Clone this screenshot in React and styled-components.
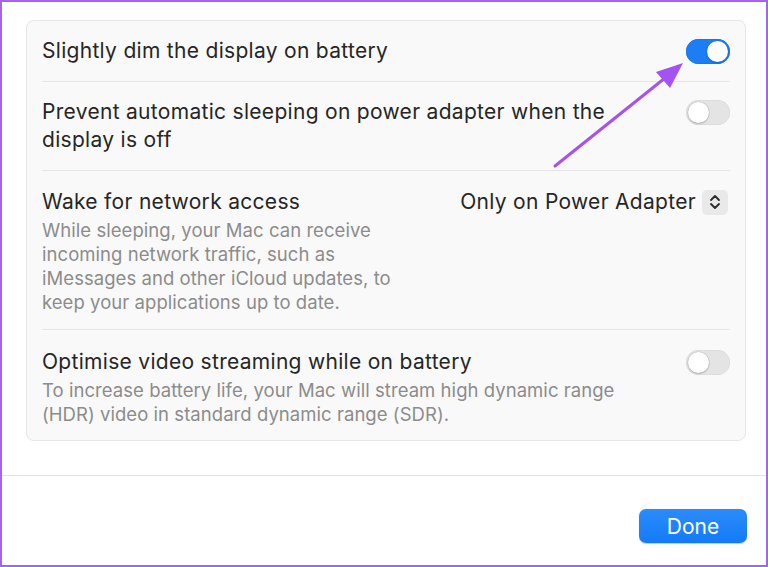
import React from 'react';
import styled, { createGlobalStyle } from 'styled-components';

const GlobalStyle = createGlobalStyle`
  html, body {
    margin: 0;
    padding: 0;
    background: #ffffff;
  }
  body {
    font-family: Inter, "Noto Sans", "Liberation Sans", sans-serif;
    -webkit-font-smoothing: antialiased;
  }
`;

const Window = styled.div`
  position: relative;
  box-sizing: border-box;
  width: 768px;
  height: 567px;
  border: 2px solid #a663ef;
  background: #ffffff;
  display: flex;
  flex-direction: column;
`;

const Content = styled.div`
  padding: 18px 20px 0 24px;
`;

const Card = styled.div`
  background: #f9f9f9;
  border: 1px solid #e6e6e6;
  border-radius: 8px;
  padding: 0 15px;
`;

const Row = styled.div`
  display: flex;
  align-items: flex-start;
  justify-content: space-between;
  gap: 16px;
  padding: ${(p) => p.$pad || '16px 0 16px'};
  border-bottom: ${(p) => (p.$last ? 'none' : '1px solid #e5e5e5')};
`;

const TextBlock = styled.div`
  display: flex;
  flex-direction: column;
`;

const Title = styled.div`
  font-size: 21px;
  line-height: 28px;
  color: #262626;
  letter-spacing: 0.3px;
`;

const Description = styled.div`
  margin-top: 2px;
  font-size: 18.5px;
  line-height: 24px;
  color: #8c8c8c;
  letter-spacing: 0.05px;
`;

const Track = styled.div`
  flex: none;
  box-sizing: border-box;
  width: 44px;
  height: 25px;
  margin-top: 2px;
  border-radius: 13px;
  padding: 2px;
  display: flex;
  justify-content: ${(p) => (p.$on ? 'flex-end' : 'flex-start')};
  background: ${(p) => (p.$on ? '#1b7ef7' : '#e4e4e4')};
  box-shadow: inset 0 0 0 0.5px ${(p) => (p.$on ? '#1670e0' : '#d6d6d6')};
`;

const Knob = styled.div`
  width: 21px;
  height: 21px;
  border-radius: 50%;
  background: #ffffff;
  box-shadow: 0 0 0 0.5px rgba(0, 0, 0, 0.12), 0 1px 2px rgba(0, 0, 0, 0.18);
`;

const Popup = styled.div`
  flex: none;
  display: flex;
  align-items: center;
  gap: 6px;
  margin-right: 2px;
  font-size: 21px;
  line-height: 28px;
  color: #262626;
  letter-spacing: 0.3px;
`;

const Stepper = styled.div`
  width: 26px;
  height: 25px;
  border-radius: 5px;
  background: #e9e9e9;
  display: flex;
  align-items: center;
  justify-content: center;
`;

const Footer = styled.div`
  margin-top: 34px;
  border-top: 1px solid #e2e2e2;
  flex: 1;
  display: flex;
  justify-content: flex-end;
  align-items: flex-start;
  padding: 33px 19px 0 0;
`;

const DoneButton = styled.button`
  width: 108px;
  height: 34px;
  border: none;
  border-radius: 7px;
  background: linear-gradient(#2b8bfb, #137bf8);
  color: #ffffff;
  font-family: Inter, "Noto Sans", "Liberation Sans", sans-serif;
  font-size: 21px;
  padding: 0;
  box-shadow: 0 0.5px 1px rgba(0, 0, 0, 0.2);
`;

const ArrowLayer = styled.svg`
  position: absolute;
  left: 0;
  top: 0;
  pointer-events: none;
`;

const Toggle = ({ on }) => (
  <Track $on={on}>
    <Knob />
  </Track>
);

const Chevrons = () => (
  <svg width="14" height="18" viewBox="0 0 14 18">
    <path d="M3 7 L7 3 L11 7" fill="none" stroke="#2a2a2a" strokeWidth="1.8" strokeLinecap="round" strokeLinejoin="round" />
    <path d="M3 11 L7 15 L11 11" fill="none" stroke="#2a2a2a" strokeWidth="1.8" strokeLinecap="round" strokeLinejoin="round" />
  </svg>
);

const App = () => (
  <>
    <GlobalStyle />
    <Window>
      <Content>
        <Card>
          <Row>
            <Title>Slightly dim the display on battery</Title>
            <Toggle on />
          </Row>
          <Row>
            <Title>
              Prevent automatic sleeping on power adapter when the
              <br />
              display is off
            </Title>
            <Toggle />
          </Row>
          <Row $pad="17px 0 15px">
            <TextBlock>
              <Title>Wake for network access</Title>
              <Description>
                While sleeping, your Mac can receive
                <br />
                incoming network traffic, such as
                <br />
                iMessages and other iCloud updates, to
                <br />
                keep your applications up to date.
              </Description>
            </TextBlock>
            <Popup>
              Only on Power Adapter
              <Stepper>
                <Chevrons />
              </Stepper>
            </Popup>
          </Row>
          <Row $last $pad="18px 0 14px">
            <TextBlock>
              <Title>Optimise video streaming while on battery</Title>
              <Description>
                To increase battery life, your Mac will stream high dynamic range
                <br />
                (HDR) video in standard dynamic range (SDR).
              </Description>
            </TextBlock>
            <Toggle />
          </Row>
        </Card>
      </Content>
      <Footer>
        <DoneButton>Done</DoneButton>
      </Footer>
      <ArrowLayer width="768" height="567" viewBox="0 0 768 567">
        <line x1="553" y1="164" x2="668" y2="72" stroke="#a552f2" strokeWidth="3" strokeLinecap="round" />
        <polygon points="681,61 654,70 668,86" fill="#a552f2" />
      </ArrowLayer>
    </Window>
  </>
);

export default App;
